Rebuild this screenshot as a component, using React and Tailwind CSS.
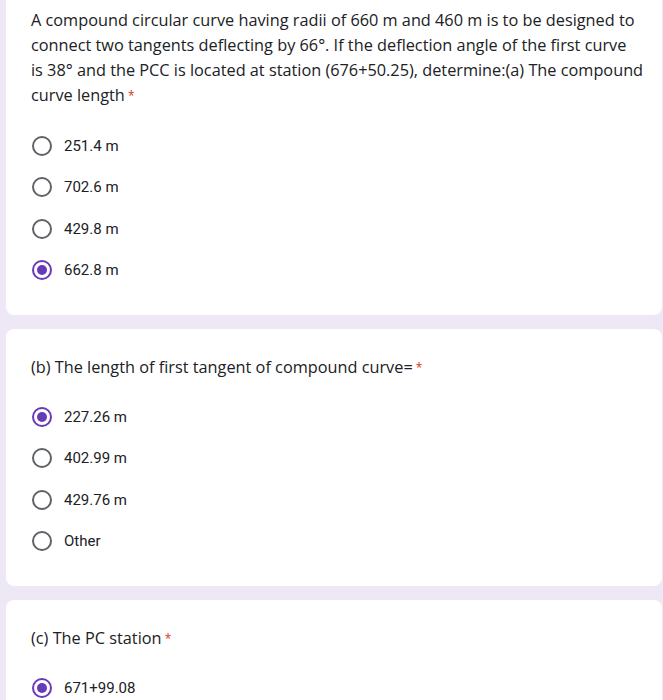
import clsx from "clsx";

const questions = [
  {
    title: [
      "A compound circular curve having radii of 660 m and 460 m is to be designed to",
      "connect two tangents deflecting by 66°. If the deflection angle of the first curve",
      "is 38° and the PCC is located at station (676+50.25), determine:(a) The compound",
      "curve length",
    ],
    options: ["251.4 m", "702.6 m", "429.8 m", "662.8 m"],
    selected: 3,
    first: true,
  },
  {
    title: ["(b) The length of first tangent of compound curve="],
    options: ["227.26 m", "402.99 m", "429.76 m", "Other"],
    selected: 0,
  },
  {
    title: ["(c) The PC station"],
    options: ["671+99.08"],
    selected: 0,
  },
];

const Radio = ({ checked }) => (
  <span
    className={clsx(
      "flex h-5 w-5 shrink-0 items-center justify-center rounded-full border-2",
      checked ? "border-[#673ab7]" : "border-[#5f6368]"
    )}
  >
    {checked && <span className="h-[10px] w-[10px] rounded-full bg-[#673ab7]" />}
  </span>
);

const QuestionCard = ({ q }) => (
  <div
    className={clsx(
      "rounded-lg bg-white pl-[25px] pr-[12px] pb-[24px] pt-[26px]",
      q.first && "-mt-[18px]"
    )}
  >
    <div className="text-[16.3px] leading-[25px] text-[#202124]">
      {q.title.map((line, i) => (
        <div key={i} className="whitespace-nowrap">
          {line}
          {i === q.title.length - 1 && (
            <span className="align-top text-[12px] text-[#d93025]">&nbsp;*</span>
          )}
        </div>
      ))}
    </div>
    <div className={clsx("flex flex-col", q.first ? "mt-[17px]" : "mt-[16px]")}>
      {q.options.map((opt, i) => (
        <div key={opt} className="flex h-[41.5px] items-center gap-[12px] pl-[1px]">
          <Radio checked={i === q.selected} />
          <span className="text-[15px] text-[#202124]" style={{ fontFamily: "Roboto, sans-serif" }}>
            {opt}
          </span>
        </div>
      ))}
    </div>
  </div>
);

export default function App() {
  return (
    <div
      className="h-[700px] overflow-hidden bg-[#ede7f6] pl-[6px] pr-[1px]"
      style={{ fontFamily: "'Open Sans', Roboto, sans-serif" }}
    >
      <div className="flex flex-col gap-[14px]">
        {questions.map((q, i) => (
          <QuestionCard key={i} q={q} />
        ))}
      </div>
    </div>
  );
}
